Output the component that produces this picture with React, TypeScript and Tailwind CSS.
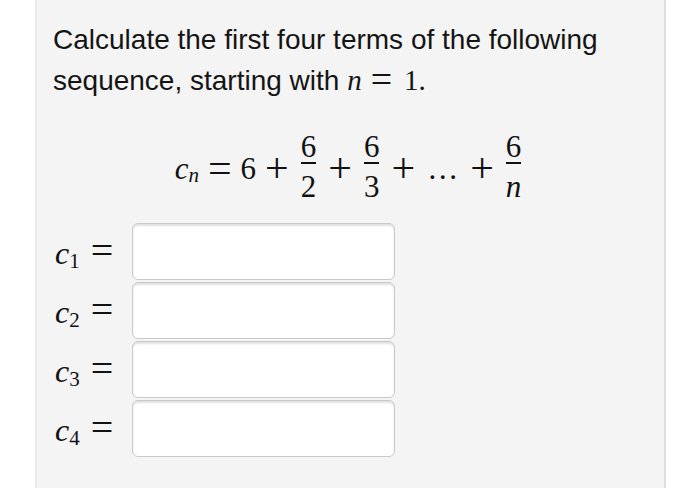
import React from "react";

const serif = "font-['Liberation_Serif','Times_New_Roman',serif]";

function Frac({ num, den, italic = false }: { num: string; den: string; italic?: boolean }) {
  return (
    <span className="inline-flex flex-col items-center px-[3px]">
      <span className="pt-[3px] leading-none">{num}</span>
      <span className="h-[1.5px] w-full bg-[#111]" />
      <span className={`mt-[7px] leading-none ${italic ? "italic" : ""}`}>{den}</span>
    </span>
  );
}

function Op({ children }: { children: React.ReactNode }) {
  return <span className="relative top-[3px] text-[42px] leading-none px-[9px]">{children}</span>;
}

export default function App() {
  const terms = ["1", "2", "3", "4"];

  return (
    <div className="w-[700px] h-[490px] bg-white">
      <div className="ml-[35px] w-[631px] h-[488px] bg-[#f4f4f4] border-l-2 border-r-2 border-l-[#e9e9e9] border-r-[#dedede] pt-[21px] pl-[16px] flex flex-col">
        <p className="font-['Liberation_Sans',Arial,sans-serif] text-[28px] leading-[37px] text-[#141414]">
          Calculate the first four terms of the following
          <br />
          sequence, starting with{" "}
          <span className={`${serif} text-[29px] leading-none`}>
            <span className="italic">n</span>
            <span className="relative top-[2px] text-[38px] pl-[9px] pr-[12px]">=</span>1.
          </span>
        </p>

        <div className={`${serif} mt-[29px] flex items-center justify-center text-[31px] text-[#111] pr-[18px]`}>
          <span className="relative top-[4px] leading-none">
            <span className="italic">c</span>
            <span className="italic text-[21px] relative top-[3px]">n</span>
          </span>
          <Op>=</Op>
          <span className="relative top-[4px] leading-none">6</span>
          <Op>+</Op>
          <Frac num="6" den="2" />
          <Op>+</Op>
          <Frac num="6" den="3" />
          <Op>+</Op>
          <span className="relative top-[4px] leading-none px-[3px]">…</span>
          <Op>+</Op>
          <Frac num="6" den="n" italic />
        </div>

        <div className="mt-[21px] flex flex-col gap-[2px]">
          {terms.map((t) => (
            <div key={t} className="flex items-center">
              <div className={`${serif} w-[79px] pl-[2px] text-[32px] leading-none text-[#111]`}>
                <span className="italic">c</span>
                <span className="text-[21px] relative top-[4px]">{t}</span>
                <span className="pl-[11px] text-[40px]">=</span>
              </div>
              <div className="w-[263px] h-[57px] rounded-[6px] border border-[#c9c9c9] bg-white shadow-[inset_0_2px_2px_rgba(0,0,0,0.12)]" />
            </div>
          ))}
        </div>
      </div>
    </div>
  );
}
